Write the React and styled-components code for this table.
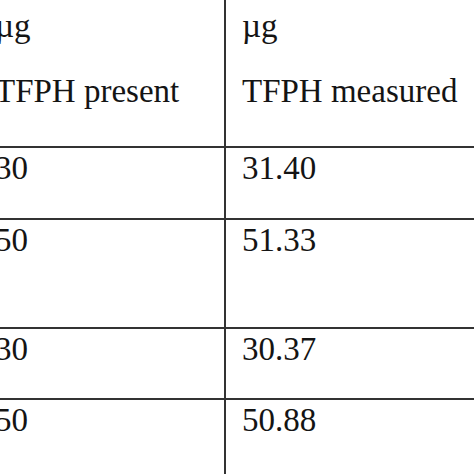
import React from "react";
import styled, { createGlobalStyle } from "styled-components";

const Global = createGlobalStyle`
  html, body {
    margin: 0;
    padding: 0;
    background: #ffffff;
    overflow: hidden;
  }
`;

const Page = styled.div`
  width: 474px;
  height: 474px;
  overflow: hidden;
  background: #fff;
`;

const Table = styled.div`
  margin-left: -22px;
  width: 540px;
  font-family: "Liberation Serif", "Times New Roman", serif;
  font-size: 33px;
  line-height: 38px;
  color: #141414;
`;

const Row = styled.div`
  display: grid;
  grid-template-columns: 248px 1fr;
  height: ${(p) => p.$h}px;
  border-bottom: 2px solid #333;
`;

const Cell = styled.div`
  padding: ${(p) => (p.$head ? "7px" : "1px")} 0 0 ${(p) => (p.$first ? "17px" : "16px")};
  border-right: ${(p) => (p.$first ? "2px solid #333" : "none")};
  white-space: nowrap;
`;

const Line = styled.div`
  & + & {
    margin-top: 27px;
  }
`;

const rows = [
  { h: 70, a: "30", b: "31.40" },
  { h: 107, a: "50", b: "51.33" },
  { h: 69, a: "30", b: "30.37" },
  { h: 90, a: "50", b: "50.88" },
];

export default function App() {
  return (
    <Page>
      <Global />
      <Table>
        <Row $h={146}>
          <Cell $first $head>
            <Line>µg</Line>
            <Line>TFPH present</Line>
          </Cell>
          <Cell $head>
            <Line>µg</Line>
            <Line>TFPH measured</Line>
          </Cell>
        </Row>
        {rows.map((r, i) => (
          <Row key={i} $h={r.h}>
            <Cell $first>{r.a}</Cell>
            <Cell>{r.b}</Cell>
          </Row>
        ))}
      </Table>
    </Page>
  );
}
